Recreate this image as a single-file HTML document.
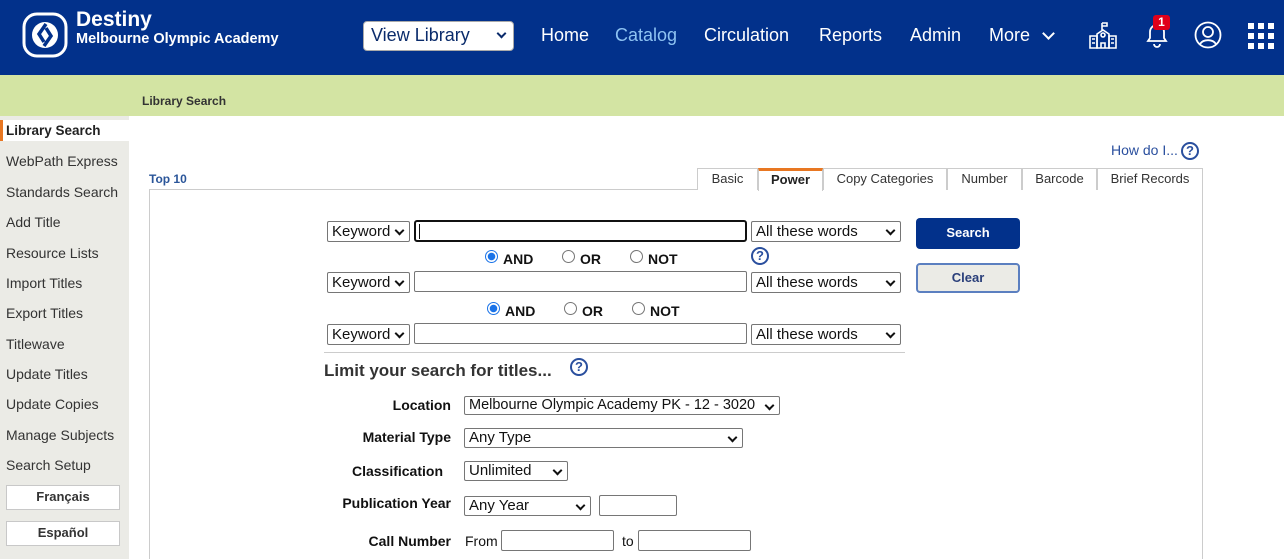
<!DOCTYPE html>
<html><head><meta charset="utf-8"><style>
*{box-sizing:border-box;margin:0;padding:0}
html,body{width:1284px;height:559px;overflow:hidden}
body{background:#fff;font-family:"Liberation Sans",Arial,sans-serif;position:relative;color:#222}
.a{position:absolute;white-space:nowrap}
.hdr{left:0;top:0;width:1284px;height:75px;background:#02318b}
.nav{top:25px;font-size:18px;color:#fff}
.green{left:0;top:75px;width:1284px;height:41px;background:#d3e4a3}
.side{left:0;top:116px;width:129px;height:443px;background:#ebebe6}
.si{left:6px;font-size:14px;color:#333}
.lb{left:6px;width:114px;height:25px;background:#fff;border:1px solid #c8c8c8;font-size:13px;font-weight:bold;text-align:center;line-height:22px;color:#333}
.sel{border:1px solid #767676;border-radius:2px;background:#fff;font-size:15px;color:#111;padding-left:4px;line-height:19px;height:21px}
.sel:after{content:"";position:absolute;right:6px;top:5px;width:5px;height:5px;border-right:2px solid #111;border-bottom:2px solid #111;transform:rotate(45deg)}
.inp{border:1px solid #767676;border-radius:2px;background:#fff;height:21px}
.rad{width:13px;height:13px;border-radius:50%;border:1px solid #767676;background:#fff}
.rad.on{border:1px solid #1a73e8;background:radial-gradient(circle,#1a73e8 0 3.5px,#fff 4px)}
.rl{font-size:14px;font-weight:bold;color:#111}
.q{width:18px;height:18px;border-radius:50%;border:2px solid #2a4f9e;color:#2a4f9e;font-size:13px;font-weight:bold;text-align:center;line-height:14px}
.tab{top:168px;height:22px;border:1px solid #ccc;border-bottom:none;font-size:13px;color:#333;text-align:center;line-height:19px;background:#fff}
.lab{font-size:14px;font-weight:bold;color:#111;text-align:right}
</style></head><body>
<div class="a hdr"></div>
<svg class="a" style="left:22px;top:12px" width="46" height="46" viewBox="0 0 46 46"><rect x="2" y="2" width="42" height="42" rx="13" fill="none" stroke="#fff" stroke-width="3"/><circle cx="23" cy="23" r="13" fill="#fff"/><path d="M24 12 L17 22 L22 30 M22 34 L29 24 L24 16" stroke="#02318b" stroke-width="3.5" fill="none"/></svg>
<div class="a" style="left:76px;top:8px;font-size:21px;font-weight:bold;color:#fff">Destiny</div>
<div class="a" style="left:76px;top:31px;font-size:14.5px;font-weight:bold;color:#fff">Melbourne Olympic Academy</div>
<div class="a" style="left:363px;top:21px;width:151px;height:30px;background:#fff;border-radius:4px;border:1px solid #aaa;font-size:18px;color:#0a2b6b;padding:3px 0 0 7px">View Library</div>
<div class="a" style="left:498px;top:30px;width:7px;height:7px;border-right:2px solid #0a2b6b;border-bottom:2px solid #0a2b6b;transform:rotate(45deg)"></div>
<div class="a nav" style="left:541px">Home</div>
<div class="a nav" style="left:615px;color:#8ec3f2">Catalog</div>
<div class="a nav" style="left:704px">Circulation</div>
<div class="a nav" style="left:819px">Reports</div>
<div class="a nav" style="left:910px">Admin</div>
<div class="a nav" style="left:989px">More</div>
<div class="a" style="left:1044px;top:29px;width:9px;height:9px;border-right:2px solid #fff;border-bottom:2px solid #fff;transform:rotate(45deg)"></div>
<svg class="a" style="left:1088px;top:20px" width="30" height="30" viewBox="0 0 30 30" fill="none" stroke="#fff" stroke-width="1.6"><path d="M14 3v7M14 3h5v3h-5"/><path d="M9 14l6-4 6 4v14H9z"/><circle cx="15" cy="15" r="2"/><path d="M2 16h7v12H2zM21 16h7v12h-7zM13 28v-5h4v5"/><path d="M4 19h3M4 23h3M23 19h3M23 23h3"/></svg>
<svg class="a" style="left:1143px;top:20px" width="28" height="28" viewBox="0 0 28 28" fill="none" stroke="#fff" stroke-width="1.8"><path d="M5 21h18l-2-3v-6a7 7 0 0 0-14 0v6z"/><path d="M11 24a3 3 0 0 0 6 0"/></svg>
<div class="a" style="left:1153px;top:15px;width:17px;height:15px;background:#e0001b;border-radius:3px;color:#fff;font-size:12px;font-weight:bold;text-align:center;line-height:15px">1</div>
<svg class="a" style="left:1194px;top:21px" width="28" height="28" viewBox="0 0 28 28" fill="none" stroke="#fff" stroke-width="1.8"><circle cx="14" cy="14" r="12.5"/><circle cx="14" cy="11" r="5"/><path d="M6 23a9 7 0 0 1 16 0"/></svg>
<svg class="a" style="left:1247px;top:22px" width="28" height="28" viewBox="0 0 28 28" fill="#fff"><rect x="1" y="1" width="6" height="6"/><rect x="11" y="1" width="6" height="6"/><rect x="21" y="1" width="6" height="6"/><rect x="1" y="11" width="6" height="6"/><rect x="11" y="11" width="6" height="6"/><rect x="21" y="11" width="6" height="6"/><rect x="1" y="21" width="6" height="6"/><rect x="11" y="21" width="6" height="6"/><rect x="21" y="21" width="6" height="6"/></svg>

<div class="a green"></div>
<div class="a" style="left:142px;top:94px;font-size:12px;font-weight:bold;color:#333">Library Search</div>

<div class="a side"></div>
<div class="a" style="left:0;top:120px;width:129px;height:21px;background:#fff;border-left:3px solid #e87722"></div>
<div class="a si" style="top:123px;font-weight:bold;color:#222;font-size:13.5px">Library Search</div>
<div class="a si" style="top:153px">WebPath Express</div>
<div class="a si" style="top:184px">Standards Search</div>
<div class="a si" style="top:214px">Add Title</div>
<div class="a si" style="top:245px">Resource Lists</div>
<div class="a si" style="top:275px">Import Titles</div>
<div class="a si" style="top:305px">Export Titles</div>
<div class="a si" style="top:336px">Titlewave</div>
<div class="a si" style="top:366px">Update Titles</div>
<div class="a si" style="top:396px">Update Copies</div>
<div class="a si" style="top:427px">Manage Subjects</div>
<div class="a si" style="top:457px">Search Setup</div>
<div class="a lb" style="top:485px">Français</div>
<div class="a lb" style="top:521px">Español</div>

<div class="a" style="left:1111px;top:142px;font-size:14px;color:#2a4f9e">How do I...</div>
<div class="a q" style="left:1181px;top:142px">?</div>
<div class="a" style="left:149px;top:172px;font-size:12px;font-weight:bold;color:#2a5599">Top 10</div>
<div class="a" style="left:149px;top:189px;width:1054px;height:370px;border:1px solid #ccc;border-bottom:none"></div>
<div class="a tab" style="left:697px;width:61px">Basic</div>
<div class="a tab" style="left:758px;width:65px;border-top:3px solid #e87722;line-height:17px;font-weight:bold;color:#222;height:23px">Power</div>
<div class="a tab" style="left:823px;width:124px">Copy Categories</div>
<div class="a tab" style="left:947px;width:75px">Number</div>
<div class="a tab" style="left:1022px;width:75px">Barcode</div>
<div class="a tab" style="left:1097px;width:106px">Brief Records</div>

<div class="a sel" style="left:327px;top:221px;width:83px">Keyword</div>
<div class="a inp" style="left:414px;top:220px;width:333px;height:22px;border:2px solid #111;border-radius:3px"></div>
<div class="a" style="left:419px;top:224px;width:1px;height:15px;background:#111"></div>
<div class="a sel" style="left:751px;top:221px;width:150px">All these words</div>
<div class="a rad on" style="left:485px;top:250px"></div><div class="a rl" style="left:503px;top:251px">AND</div>
<div class="a rad" style="left:562px;top:250px"></div><div class="a rl" style="left:580px;top:251px">OR</div>
<div class="a rad" style="left:630px;top:250px"></div><div class="a rl" style="left:648px;top:251px">NOT</div>
<div class="a q" style="left:751px;top:247px">?</div>
<div class="a sel" style="left:327px;top:272px;width:83px">Keyword</div>
<div class="a inp" style="left:414px;top:271px;width:333px"></div>
<div class="a sel" style="left:751px;top:272px;width:150px">All these words</div>
<div class="a rad on" style="left:487px;top:302px"></div><div class="a rl" style="left:505px;top:303px">AND</div>
<div class="a rad" style="left:564px;top:302px"></div><div class="a rl" style="left:582px;top:303px">OR</div>
<div class="a rad" style="left:632px;top:302px"></div><div class="a rl" style="left:650px;top:303px">NOT</div>
<div class="a sel" style="left:327px;top:324px;width:83px">Keyword</div>
<div class="a inp" style="left:414px;top:323px;width:333px"></div>
<div class="a sel" style="left:751px;top:324px;width:150px">All these words</div>
<div class="a" style="left:916px;top:218px;width:104px;height:31px;background:#02318b;border-radius:4px;color:#fff;font-size:13px;font-weight:bold;text-align:center;line-height:30px">Search</div>
<div class="a" style="left:916px;top:263px;width:104px;height:30px;background:#ebebe6;border:2px solid #5b7fc0;border-radius:4px;color:#2a3f7a;font-size:13px;font-weight:bold;text-align:center;line-height:26px">Clear</div>
<div class="a" style="left:324px;top:352px;width:581px;height:1px;background:#ccc"></div>
<div class="a" style="left:324px;top:361px;font-size:17px;font-weight:bold;color:#333">Limit your search for titles...</div>
<div class="a q" style="left:570px;top:358px">?</div>

<div class="a lab" style="left:330px;width:121px;top:397px">Location</div>
<div class="a sel" style="left:464px;top:396px;width:316px;height:19px;line-height:16px;font-size:14.5px">Melbourne Olympic Academy PK - 12 - 3020</div>
<div class="a lab" style="left:330px;width:121px;top:429px">Material Type</div>
<div class="a sel" style="left:464px;top:428px;width:279px;height:20px;line-height:18px">Any Type</div>
<div class="a lab" style="left:330px;width:113px;top:463px">Classification</div>
<div class="a sel" style="left:464px;top:461px;width:104px;height:20px;line-height:18px">Unlimited</div>
<div class="a lab" style="left:330px;width:121px;top:495px">Publication Year</div>
<div class="a sel" style="left:464px;top:496px;width:127px;height:20px;line-height:18px">Any Year</div>
<div class="a inp" style="left:599px;top:495px;width:78px"></div>
<div class="a lab" style="left:330px;width:121px;top:533px">Call Number</div>
<div class="a" style="left:465px;top:533px;font-size:14px;color:#111">From</div>
<div class="a inp" style="left:501px;top:530px;width:113px"></div>
<div class="a" style="left:622px;top:533px;font-size:14px;color:#111">to</div>
<div class="a inp" style="left:638px;top:530px;width:113px"></div>
</body></html>
